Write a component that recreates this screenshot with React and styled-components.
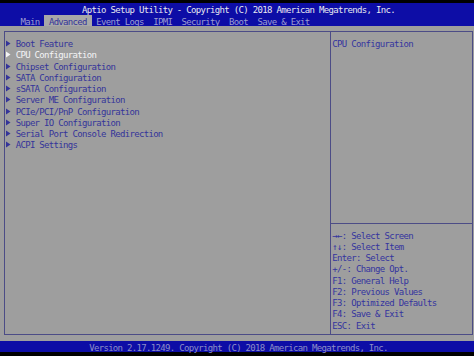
import React from "react";
import styled, { createGlobalStyle } from "styled-components";

const CW = 4.74; // character cell width
const RH = 11.26; // row height
const LH = RH + 3; // line box, pushes glyphs ~1.5px down inside a row

const Global = createGlobalStyle`
  html, body { margin: 0; padding: 0; background: #000; }
  body { width: 474px; height: 356px; overflow: hidden; }
`;

const Screen = styled.div`
  width: 474px;
  height: 356px;
  background: #000;
  display: flex;
  flex-direction: column;
  padding-top: 3.3px;
  box-sizing: border-box;
  font-family: "DejaVu Sans Mono", "Liberation Mono", monospace;
  font-size: 9px;
  letter-spacing: ${CW - 5.418}px;
  line-height: ${LH}px;
  white-space: pre;
`;

const Header = styled.div`
  background: #0d0da6;
  display: flex;
  flex-direction: column;
`;

const Title = styled.div`
  height: ${RH}px;
  text-align: center;
  padding-left: 3px;
  color: #e8e8f0;
`;

const Menu = styled.div`
  height: ${RH}px;
  display: flex;
  padding-left: ${1.5 + 3 * CW}px;
`;

const Tab = styled.div`
  height: ${RH}px;
  padding: 0 ${CW}px;
  color: ${(p) => (p.$active ? "#34349a" : "#9c9cd2")};
  background: ${(p) => (p.$active ? "#a8a8a8" : "transparent")};
`;

const Body = styled.div`
  height: ${28 * RH}px;
  background: #9e9e9e;
  box-sizing: border-box;
  padding: 5.6px 1px 6.1px 3.5px;
  display: flex;
`;

const Frame = styled.div`
  flex: 1;
  border: 1px solid #4c4c86;
  display: flex;
`;

const LeftPanel = styled.div`
  width: 326.1px;
  border-right: 1px solid #4c4c86;
  padding: 4.7px 0 0 1.2px;
  box-sizing: border-box;
  display: flex;
  flex-direction: column;
`;

const Item = styled.div`
  height: ${RH}px;
  display: flex;
  align-items: flex-start;
  color: ${(p) => (p.$selected ? "#f4f4f6" : "#34349a")};
`;

const ArrowCell = styled.span`
  width: ${2 * CW}px;
  height: ${RH + 2}px;
  display: flex;
  align-items: center;
  flex-shrink: 0;
`;

const ItemLabel = styled.span`
  padding-left: 0.5px;
`;

const RightPanel = styled.div`
  flex: 1;
  display: flex;
  flex-direction: column;
`;

const HelpArea = styled.div`
  flex: 1;
  padding: 4.7px 0 0 1.7px;
  color: #34349e;
  border-bottom: 1px solid #4c4c86;
`;

const Keys = styled.div`
  padding: 4.6px 0 4.2px 1.7px;
  display: flex;
  flex-direction: column;
`;

const KeyLine = styled.div`
  height: ${RH}px;
  color: #34349e;
`;

const Footer = styled.div`
  height: ${RH}px;
  background: #0d0da6;
  color: #8e8ec8;
  text-align: center;
  padding-left: 3px;
`;

const Arrow = ({ color }) => (
  <ArrowCell>
    <svg width="5" height="7" viewBox="0 0 5 7">
      <path d="M0 0.5 L4.5 3.5 L0 6.5 Z" fill={color} />
    </svg>
  </ArrowCell>
);

const tabs = ["Main", "Advanced", "Event Logs", "IPMI", "Security", "Boot", "Save & Exit"];

const items = [
  "Boot Feature",
  "CPU Configuration",
  "Chipset Configuration",
  "SATA Configuration",
  "sSATA Configuration",
  "Server ME Configuration",
  "PCIe/PCI/PnP Configuration",
  "Super IO Configuration",
  "Serial Port Console Redirection",
  "ACPI Settings",
];

const keys = [
  "\u2192\u2190: Select Screen",
  "\u2191\u2193: Select Item",
  "Enter: Select",
  "+/-: Change Opt.",
  "F1: General Help",
  "F2: Previous Values",
  "F3: Optimized Defaults",
  "F4: Save & Exit",
  "ESC: Exit",
];

export default function App() {
  return (
    <>
      <Global />
      <Screen>
        <Header>
          <Title>Aptio Setup Utility - Copyright (C) 2018 American Megatrends, Inc.</Title>
          <Menu>
            {tabs.map((t) => (
              <Tab key={t} $active={t === "Advanced"}>
                {t}
              </Tab>
            ))}
          </Menu>
        </Header>
        <Body>
          <Frame>
            <LeftPanel>
              {items.map((it, i) => (
                <Item key={it} $selected={i === 1}>
                  <Arrow color={i === 1 ? "#f4f4f6" : "#34349a"} />
                  <ItemLabel>{it}</ItemLabel>
                </Item>
              ))}
            </LeftPanel>
            <RightPanel>
              <HelpArea>CPU Configuration</HelpArea>
              <Keys>
                {keys.map((k) => (
                  <KeyLine key={k}>{k}</KeyLine>
                ))}
              </Keys>
            </RightPanel>
          </Frame>
        </Body>
        <Footer>Version 2.17.1249. Copyright (C) 2018 American Megatrends, Inc.</Footer>
      </Screen>
    </>
  );
}
